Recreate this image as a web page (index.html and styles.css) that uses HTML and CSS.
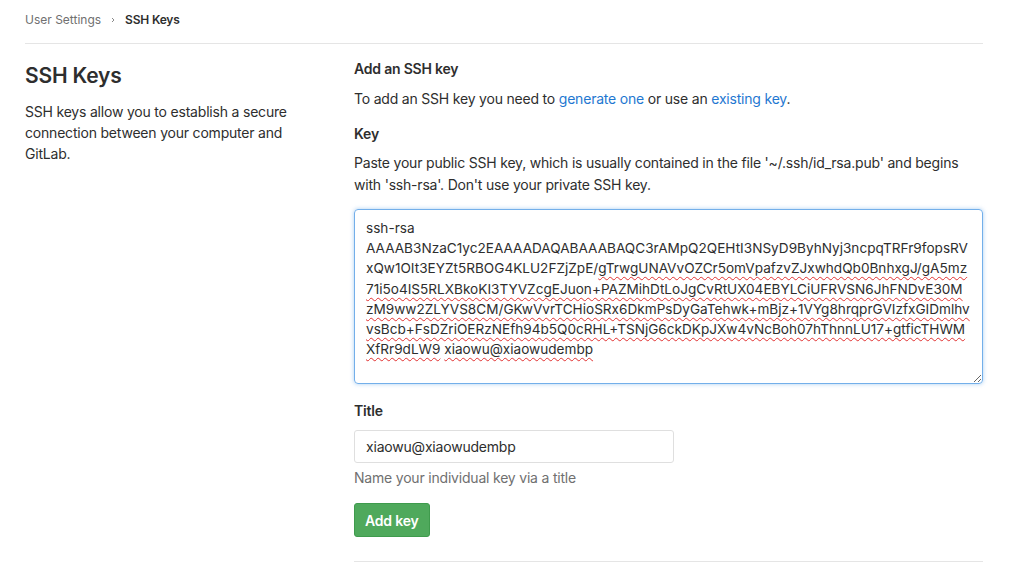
FILE: index.html
```html
<!DOCTYPE html>
<html lang="en">
<head>
<meta charset="utf-8">
<title>SSH Keys · User Settings</title>
<link rel="stylesheet" href="styles.css">
</head>
<body>
<div class="page">
  <nav class="breadcrumbs">
    <a class="crumb" href="#">User Settings</a>
    <svg class="chev" viewBox="0 0 8 8" width="8" height="8"><path d="M3 2l2 2-2 2" fill="none" stroke="#8a8a8a" stroke-width="1"/></svg>
    <span class="crumb current">SSH Keys</span>
  </nav>
  <div class="settings">
    <aside class="side">
      <h2 class="side-title">SSH Keys</h2>
      <p class="side-text">SSH keys allow you to establish a secure connection between your computer and GitLab.</p>
    </aside>
    <section class="main">
      <h5 class="section-title">Add an SSH key</h5>
      <p class="intro">To add an SSH key you need to <a href="#">generate one</a> or use an <a href="#">existing key</a>.</p>
      <form class="form">
        <label class="label">Key</label>
        <p class="hint">Paste your public SSH key, which is usually contained in the file '~/.ssh/id_rsa.pub' and begins with 'ssh-rsa'. Don't use your private SSH key.</p>
        <div class="keybox"><span class="ln">ssh-rsa</span><span class="ln">AAAAB3NzaC1yc2EAAAADAQABAAABAQC3rAMpQ2QEHtI3NSyD9ByhNyj3ncpqTRFr9fopsRV</span><span class="ln">xQw1OIt3EYZt5RBOG4KLU2FZjZpE/<span class="sp">gTrwgUNAVvOZCr5omVpafzvZJxwhdQb0BnhxgJ/gA5mz</span></span><span class="ln"><span class="sp">71i5o4IS5RLXBkoKI3TYVZcgEJuon+PAZMihDtLoJgCvRtUX04EBYLCiUFRVSN6JhFNDvE30M</span></span><span class="ln"><span class="sp">zM9ww2ZLYVS8CM/GKwVvrTCHioSRx6DkmPsDyGaTehwk+mBjz+1VYg8hrqprGVIzfxGIDmlhv</span></span><span class="ln"><span class="sp">vsBcb+FsDZriOERzNEfh94b5Q0cRHL+TSNjG6ckDKpJXw4vNcBoh07hThnnLU17+gtficTHWM</span></span><span class="ln"><span class="sp">XfRr9dLW9</span> <span class="sp">xiaowu@xiaowudembp</span></span></div>
        <label class="label title-label">Title</label>
        <div class="input">xiaowu@xiaowudembp</div>
        <p class="help">Name your individual key via a title</p>
        <button class="btn" type="button">Add key</button>
      </form>
      <hr class="rule">
    </section>
  </div>
</div>
</body>
</html>
```

FILE: styles.css
```css
* { box-sizing: border-box; }
html, body { margin: 0; padding: 0; background: #fff; }
body {
  font-family: Inter, "Noto Sans", "Liberation Sans", sans-serif;
  font-size: 14px;
  letter-spacing: -0.2px;
  color: #2e2e2e;
  overflow: hidden;
}
.page {
  width: 958px;
  margin-left: 25px;
}
.breadcrumbs {
  height: 44px;
  display: flex;
  align-items: center;
  gap: 8px;
  border-bottom: 1px solid #e5e5e5;
  font-size: 12px;
  letter-spacing: 0;
  padding-bottom: 4px;
}
.crumb { color: #707070; text-decoration: none; }
.crumb.current { color: #2e2e2e; font-weight: 600; letter-spacing: -0.2px; }
.chev { margin-top: 1px; }
.settings {
  display: grid;
  grid-template-columns: 329px 1fr;
}
.side-title {
  margin: 19px 0 0;
  font-size: 21px;
  font-weight: 600;
  line-height: 26px;
  color: #2e2e2e;
}
.side-text {
  margin: 12px 0 0;
  line-height: 21px;
  width: 290px;
}
.section-title {
  margin: 16px 0 0;
  font-size: 14px;
  font-weight: 600;
  line-height: 18px;
}
.intro { margin: 11px 0 0; line-height: 20px; }
.intro a { color: #1f78d1; text-decoration: none; }
.form { display: flex; flex-direction: column; align-items: flex-start; }
.label {
  display: block;
  margin-top: 16px;
  font-weight: 600;
  line-height: 18px;
}
.hint { margin: 9px 0 0; line-height: 22px; }
.keybox {
  margin-top: 13px;
  width: 629px;
  height: 175px;
  border: 1px solid #73afea;
  border-radius: 4px;
  box-shadow: 0 0 4px rgba(115, 175, 234, 0.6);
  padding: 8px 11px;
  line-height: 20.2px;
  font-size: 13.6px;
  letter-spacing: 0;
  resize: vertical;
  overflow: auto;
  color: #2e2e2e;
}
.ln { display: block; white-space: nowrap; }
.sp {
  text-decoration: underline wavy #e03030;
  text-decoration-thickness: 1px;
  text-underline-offset: 3px;
}
.title-label { margin-top: 18px; }
.input {
  margin-top: 10px;
  width: 320px;
  height: 33px;
  border: 1px solid #dfdfdf;
  border-radius: 3px;
  padding: 0 11px;
  display: flex;
  align-items: center;
}
.help { margin: 5px 0 0; color: #707070; line-height: 20px; }
.btn {
  margin-top: 15px;
  height: 34px;
  padding: 0 10px;
  background: #4fa95c;
  border: 1px solid #3f9b4d;
  border-radius: 3px;
  color: #fff;
  font-family: inherit;
  font-size: 14px;
  font-weight: 600;
  letter-spacing: -0.2px;
}
.rule {
  margin: 24px 0 0;
  border: 0;
  border-top: 1px solid #e5e5e5;
}
```
